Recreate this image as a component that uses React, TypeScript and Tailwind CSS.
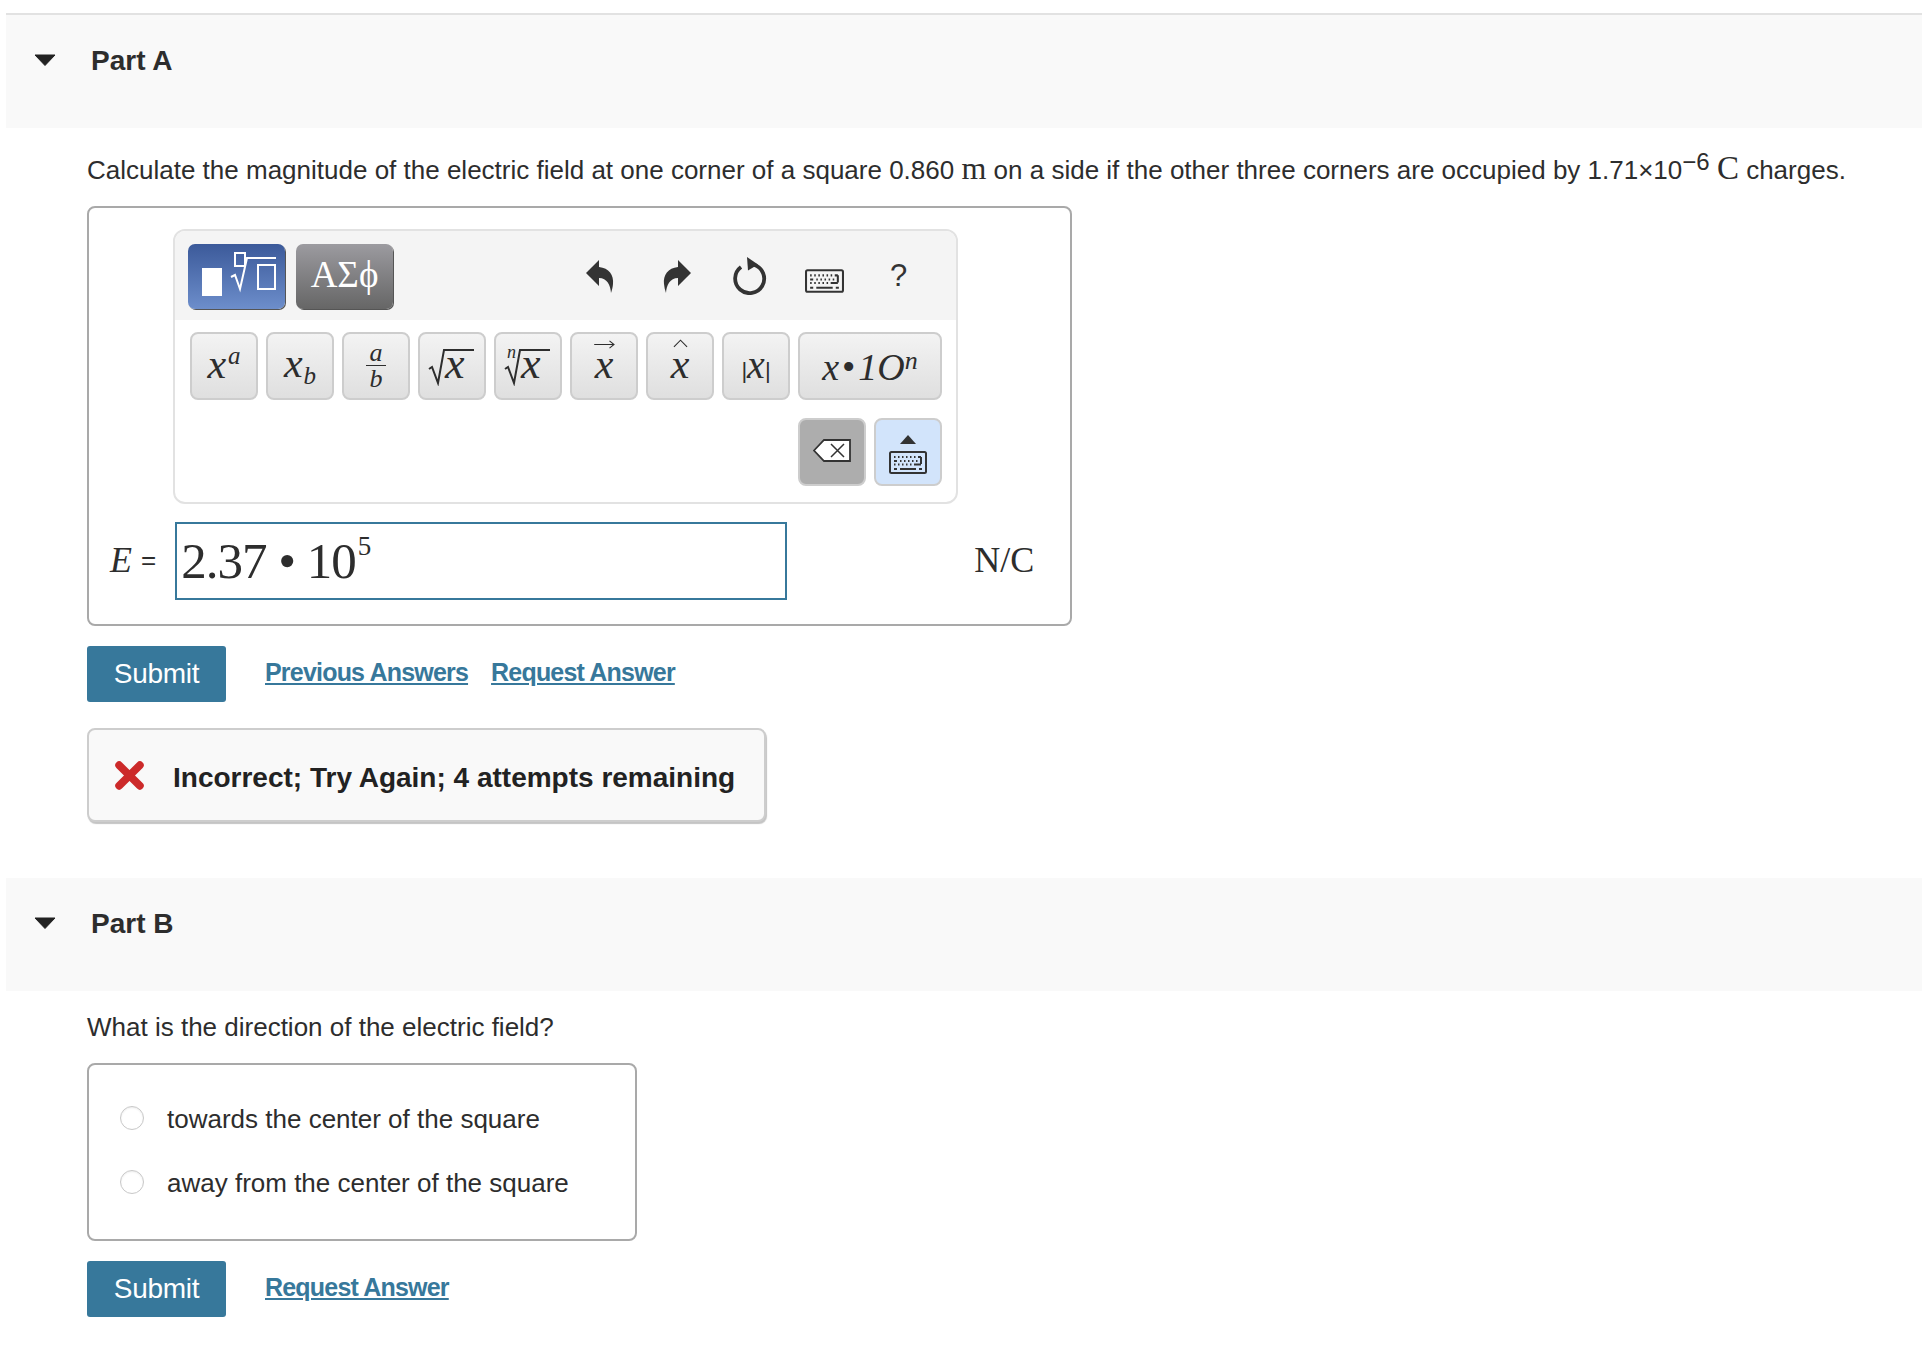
import React from 'react';

const serif = 'font-["Liberation_Serif",serif]';

const Keyboard = ({ className }: { className?: string }) => (
  <svg viewBox="0 0 38 23" className={className}>
    <rect x="1" y="1" width="36" height="21" rx="1.5" fill="none" stroke="#333" strokeWidth="2" />
    <path d="M5 6h1.5M9 6h1.5M13 6h1.5M17 6h1.5M21 6h1.5M25 6h1.5M29 6h3M5 10h3M11 10h1.5M15 10h1.5M19 10h1.5M23 10h1.5M27 10h1.5M32 6v7M5 13.500h1.500M9 13.500h1.500M13 13.500h1.500M17 13.500h1.500M21 13.500h1.500M25 13.500h7M5 18h3M11 18h16M30 18h3" stroke="#333" strokeWidth="2" fill="none" />
  </svg>
);

const MathButton = ({ children, className = 'w-[68px]' }: { children: React.ReactNode; className?: string }) => (
  <div className={`h-[68px] ${className} flex items-center justify-center rounded-[8px] border-2 border-[#cdcdcd] bg-gradient-to-b from-[#f3f3f3] to-[#dfdfdf] text-[#2d2d2d] ${serif}`}>
    {children}
  </div>
);

const Radical = ({ n }: { n?: boolean }) => (
  <span className="relative w-[50px] h-[40px] block">
    <svg viewBox="0 0 50 40" className="w-[50px] h-[40px]">
      <path d="M2 23l3-2 6 16 6-33h30" fill="none" stroke="#2d2d2d" strokeWidth="2" />
    </svg>
    {n && <span className="absolute left-[4px] -top-[3px] italic text-[18px] leading-[18px]">n</span>}
    <span className="absolute left-[18px] top-[-4px] italic text-[44px] leading-[44px]">x</span>
  </span>
);

const PartHeader = ({ label }: { label: string }) => (
  <div className="h-[113px] bg-[#f9f9f9] flex items-start pt-[30px]">
    <svg viewBox="0 0 22 12" className="w-[22px] h-[12px] ml-[28px] mt-[9px]">
      <path d="M1 1h20L11 11.500z" fill="#222" stroke="#222" strokeLinejoin="round" />
    </svg>
    <h2 className="ml-[35px] text-[28px] leading-[31px] font-bold text-[#2d2d2d]">{label}</h2>
  </div>
);

const SubmitButton = () => (
  <button className="w-[139px] h-[56px] bg-[#37789b] rounded-[3px] text-white text-[28px] tracking-[-0.3px]">Submit</button>
);

const LinkText = ({ children }: { children: React.ReactNode }) => (
  <a className="text-[25px] leading-[30px] font-bold text-[#37789b] underline tracking-[-0.8px] -mt-[5px]">{children}</a>
);

const Radio = ({ label }: { label: string }) => (
  <div className="flex items-center h-[64px]">
    <span className="w-[24px] h-[24px] rounded-full border border-[#c8c8c8] bg-white shadow-[inset_0_1px_2px_rgba(0,0,0,0.08)]" />
    <span className="ml-[23px] text-[26px] text-[#2d2d2d] mt-[2px]">{label}</span>
  </div>
);

export default function App() {
  return (
    <div className='min-h-[1362px] bg-white pt-[13px] pl-[6px] font-["Liberation_Sans",Arial,sans-serif] text-[#2d2d2d]'>
      <div className="border-t-2 border-[#e2e2e2]">
        <PartHeader label="Part A" />
      </div>

      <div className="pl-[81px]">
        <p className="mt-[20px] h-[47px] text-[26px] leading-[40px] whitespace-nowrap">
          Calculate the magnitude of the electric field at one corner of a square 0.860{' '}
          <span className={`${serif} text-[32px]`}>m</span> on a side if the other three corners are occupied by 1.71×10
          <sup className="text-[24px] leading-none -top-[9px] relative align-baseline">−6</sup>{' '}
          <span className={`${serif} text-[33px]`}>C</span> charges.
        </p>

        {/* Answer box */}
        <div className="mt-[11px] w-[985px] h-[420px] border-2 border-[#a9a9a9] rounded-[8px] pt-[21px]">
          <div className="ml-[84px] w-[785px] h-[275px] border-2 border-[#e2e2e2] rounded-[12px] overflow-hidden">
            <div className="h-[89px] bg-[#f4f4f4] flex items-start pt-[13px] pl-[13px]">
              <div className="w-[97px] h-[65px] rounded-[7px] bg-gradient-to-b from-[#3c5a9a] to-[#6d8ecb] shadow-[1px_1px_0_#555] flex items-end pb-[13px] pl-[14px]">
                <span className="w-[20px] h-[28px] bg-white" />
                <svg viewBox="0 0 48 44" className="w-[48px] h-[44px] ml-[8px]">
                  <rect x="5" y="1" width="10" height="13" fill="none" stroke="#fff" strokeWidth="2" />
                  <path d="M1 25l4-2 5 14 7-31h29" fill="none" stroke="#fff" strokeWidth="2" />
                  <rect x="28" y="13" width="17" height="24" fill="none" stroke="#fff" strokeWidth="2" />
                </svg>
              </div>
              <div className={`ml-[11px] w-[97px] h-[65px] rounded-[7px] bg-gradient-to-b from-[#9c9ba0] to-[#666] shadow-[1px_1px_0_#555] flex items-center justify-center text-white text-[37px] pb-[3px] ${serif}`}>
                ΑΣϕ
              </div>
              <div className="ml-[193px] mt-[14px] flex items-start">
                <svg viewBox="0 0 28 33" className="w-[28px] h-[33px] mt-[2px]">
                  <path d="M0 13L13 0v7c10 1 15 8 14 17-.2 3-1 6-2 9-.5-8-4-15-12-15v8z" fill="#333" />
                </svg>
                <svg viewBox="0 0 28 33" className="w-[28px] h-[33px] ml-[49px] mt-[2px]">
                  <path d="M28 13L15 0v7C5 8 0 15 1 24c.2 3 1 6 2 9 .5-8 4-15 12-15v8z" fill="#333" />
                </svg>
                <svg viewBox="0 0 34 38" className="w-[34px] h-[38px] ml-[42px] -mt-[1px]">
                  <path d="M21 7.800A14.500 14.500 0 1 1 8 10" fill="none" stroke="#333" strokeWidth="3.800" />
                  <path d="M14 0l11 7.500-10 6z" fill="#333" />
                </svg>
                <Keyboard className="w-[39px] h-[24px] ml-[38px] mt-[11px]" />
                <span className="ml-[46px] text-[31px] leading-[36px] text-[#333]">?</span>
              </div>
            </div>

            {/* Template buttons */}
            <div className="pl-[15px] pt-[12px]">
              <div className="flex gap-[8px]">
                <MathButton>
                  <span className="italic text-[42px] leading-none -mt-[4px]">x<sup className="text-[25px] align-baseline -top-[14px] leading-none ml-[2px]">a</sup></span>
                </MathButton>
                <MathButton>
                  <span className="italic text-[42px] leading-none -mt-[6px]">x<sub className="text-[25px] align-baseline top-[7px] bottom-auto leading-none ml-[1px]">b</sub></span>
                </MathButton>
                <MathButton>
                  <span className="flex flex-col items-center italic text-[26px] leading-[25px] -mt-[1px]">
                    <span>a</span>
                    <span className="w-[20px] h-[1px] bg-[#2d2d2d]" />
                    <span>b</span>
                  </span>
                </MathButton>
                <MathButton><Radical /></MathButton>
                <MathButton><Radical n /></MathButton>
                <MathButton>
                  <span className="relative italic text-[42px] leading-none -mt-[4px]">
                    <svg viewBox="0 0 24 10" className="absolute -top-[3px] -left-[1px] w-[22px] h-[9px]">
                      <path d="M0 5h22M17 1l5 4-5 4" fill="none" stroke="#2d2d2d" strokeWidth="1.200" />
                    </svg>
                    x
                  </span>
                </MathButton>
                <MathButton>
                  <span className="relative italic text-[42px] leading-none -mt-[4px]">
                    <svg viewBox="0 0 16 9" className="absolute -top-[4px] left-[2px] w-[15px] h-[9px]">
                      <path d="M1 8l7-7 7 7" fill="none" stroke="#2d2d2d" strokeWidth="1.200" />
                    </svg>
                    x
                  </span>
                </MathButton>
                <MathButton>
                  <span className="flex items-baseline text-[40px] leading-none italic -mt-[3px]">
                    <span className='not-italic font-["Liberation_Sans",sans-serif] text-[22px]'>|</span>
                    <span>x</span>
                    <span className='not-italic font-["Liberation_Sans",sans-serif] text-[22px]'>|</span>
                  </span>
                </MathButton>
                <MathButton className="w-[144px]">
                  <span className="italic text-[38px] leading-none mt-[1px]">
                    x<span className="not-italic mx-[3px]">•</span>1O<sup className="text-[26px] align-baseline -top-[11px] leading-none">n</sup>
                  </span>
                </MathButton>
              </div>
              <div className="flex gap-[8px] justify-end pr-[14px] mt-[18px]">
                <div className="w-[68px] h-[68px] rounded-[8px] border-2 border-[#cdcdcd] bg-[#adadad] flex items-center justify-center pb-[3px]">
                  <svg viewBox="0 0 38 23" className="w-[38px] h-[23px]">
                    <path d="M1 11.500L11 1h26v21H11z" fill="#fff" stroke="#333" strokeWidth="1.800" />
                    <path d="M18 5l13 13M31 5L18 18" stroke="#333" strokeWidth="1.500" />
                  </svg>
                </div>
                <div className="w-[68px] h-[68px] rounded-[8px] border-2 border-[#cdcdcd] bg-[#d2e4fb] flex flex-col items-center pt-[15px]">
                  <span className="w-0 h-0 border-x-[8px] border-x-transparent border-b-[9px] border-b-[#333]" />
                  <Keyboard className="w-[38px] h-[23px] mt-[7px]" />
                </div>
              </div>
            </div>
          </div>

          <div className="flex items-center mt-[18px]">
            <span className={`ml-[21px] italic text-[36px] leading-none -mt-[3px] ${serif}`}>E</span>
            <span className="ml-[9px] text-[26px] -mt-[2px]">=</span>
            <div className={`ml-[19px] w-[612px] h-[78px] border-2 border-[#37789b] pl-[4px] flex items-center text-[51px] tracking-[-1px] ${serif}`}>
              <span>2.37 • 10<sup className="text-[27px] align-baseline -top-[23px] leading-none ml-[2px]">5</sup></span>
            </div>
            <span className={`ml-[187px] text-[36px] -mt-[3px] ${serif}`}>N/C</span>
          </div>
        </div>

        <div className="flex items-center mt-[20px]">
          <SubmitButton />
          <div className="ml-[39px] flex gap-[23px]">
            <LinkText>Previous Answers</LinkText>
            <LinkText>Request Answer</LinkText>
          </div>
        </div>

        {/* Feedback */}
        <div className="mt-[26px] w-[679px] h-[94px] rounded-[8px] border-2 border-[#cdcdcd] bg-[#f9f9f9] shadow-[1px_2px_1px_#c4c4c4] flex items-center">
          <svg viewBox="0 0 28 28" className="ml-[26px] w-[29px] h-[29px]">
            <path d="M4 4l20 20M24 4L4 24" stroke="#cc2a2a" strokeWidth="7.500" strokeLinecap="round" />
          </svg>
          <span className="ml-[29px] mt-[5px] text-[28px] font-bold text-[#222]">Incorrect; Try Again; 4 attempts remaining</span>
        </div>
      </div>

      <div className="mt-[56px]">
        <PartHeader label="Part B" />
      </div>

      <div className="pl-[81px]">
        <p className="mt-[16px] text-[26px] leading-[40px]">What is the direction of the electric field?</p>
        <div className="mt-[16px] w-[550px] h-[178px] border-2 border-[#a9a9a9] rounded-[8px] pl-[31px] pt-[21px]">
          <Radio label="towards the center of the square" />
          <Radio label="away from the center of the square" />
        </div>
        <div className="flex items-center mt-[20px]">
          <SubmitButton />
          <div className="ml-[39px] flex">
            <LinkText>Request Answer</LinkText>
          </div>
        </div>
      </div>
    </div>
  );
}
